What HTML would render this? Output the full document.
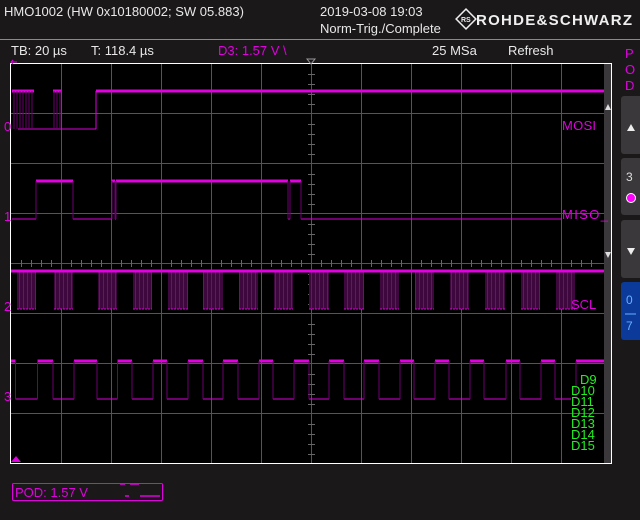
<!DOCTYPE html>
<html><head><meta charset="utf-8"><style>
body{margin:0;width:640px;height:520px;background:#1b181a;overflow:hidden;font-family:"Liberation Sans",sans-serif;}
svg{position:absolute;left:0;top:0}
</style></head><body>
<svg width="640" height="520" viewBox="0 0 640 520" xmlns="http://www.w3.org/2000/svg" font-family="Liberation Sans, sans-serif">
<defs>
<pattern id="br" width="4" height="10" patternUnits="userSpaceOnUse">
<rect width="4" height="10" fill="#3e083e"/><rect x="3" width="1" height="10" fill="#66166a"/>
</pattern>
</defs>
<rect width="640" height="520" fill="#1b181a"/>
<line x1="0" y1="39.5" x2="640" y2="39.5" stroke="#8a8a8a" stroke-width="1"/>
<g fill="#e8e8e8" font-size="13">
<text x="4" y="16">HMO1002 (HW 0x10180002; SW 05.883)</text>
<text x="320" y="16">2019-03-08 19:03</text>
<text x="320" y="33">Norm-Trig./Complete</text>
<text x="11" y="55">TB: 20 µs</text>
<text x="91" y="55">T: 118.4 µs</text>
<text x="432" y="55">25 MSa</text>
<text x="508" y="55">Refresh</text>
</g>
<text x="218" y="55" fill="#e000e0" font-size="13">D3: 1.57 V  \</text>
<g transform="translate(466,19)"><rect x="-7" y="-7" width="14" height="14" transform="rotate(45)" fill="none" stroke="#eee" stroke-width="1.5"/><text x="-5" y="3" font-size="7" fill="#eee" font-weight="bold">RS</text></g>
<text x="476" y="25" fill="#f0f0f0" font-size="15" font-weight="bold" textLength="156">ROHDE&amp;SCHWARZ</text>
<g fill="#e000e0" font-size="13"><text x="625" y="58">P</text><text x="625" y="74">O</text><text x="625" y="90">D</text></g>
<rect x="10.5" y="63.5" width="601" height="400" fill="#000" stroke="#fff" stroke-width="1"/>
<rect x="604" y="64" width="7" height="399" fill="#3a383a"/>
<g stroke="#555" stroke-width="1">
<path d="M61.5 64V463M111.5 64V463M161.5 64V463M211.5 64V463M261.5 64V463M311.5 64V463M361.5 64V463M411.5 64V463M461.5 64V463M511.5 64V463M561.5 64V463"/>
<path d="M11 113.5H604M11 163.5H604M11 213.5H604M11 263.5H604M11 313.5H604M11 363.5H604M11 413.5H604"/>
</g>
<g stroke="#666" stroke-width="1">
<path d="M308 74.5h7M308 84.5h7M308 94.5h7M308 104.5h7M308 124.5h7M308 134.5h7M308 144.5h7M308 154.5h7M308 174.5h7M308 184.5h7M308 194.5h7M308 204.5h7M308 224.5h7M308 234.5h7M308 244.5h7M308 254.5h7M308 274.5h7M308 284.5h7M308 294.5h7M308 304.5h7M308 324.5h7M308 334.5h7M308 344.5h7M308 354.5h7M308 374.5h7M308 384.5h7M308 394.5h7M308 404.5h7M308 424.5h7M308 434.5h7M308 444.5h7M308 454.5h7"/>
<path d="M21.5 260v7M31.5 260v7M41.5 260v7M51.5 260v7M71.5 260v7M81.5 260v7M91.5 260v7M101.5 260v7M121.5 260v7M131.5 260v7M141.5 260v7M151.5 260v7M171.5 260v7M181.5 260v7M191.5 260v7M201.5 260v7M221.5 260v7M231.5 260v7M241.5 260v7M251.5 260v7M271.5 260v7M281.5 260v7M291.5 260v7M301.5 260v7M321.5 260v7M331.5 260v7M341.5 260v7M351.5 260v7M371.5 260v7M381.5 260v7M391.5 260v7M401.5 260v7M421.5 260v7M431.5 260v7M441.5 260v7M451.5 260v7M471.5 260v7M481.5 260v7M491.5 260v7M501.5 260v7M521.5 260v7M531.5 260v7M541.5 260v7M551.5 260v7M571.5 260v7M581.5 260v7M591.5 260v7"/>
</g>
<path d="M307 59h8l-4 5z" fill="none" stroke="#999"/>
<path d="M11 62h6M13 60l-2 2 2 2" stroke="#e000e0" fill="none"/>
<g stroke="#e000e0">
<path d="M12 91H34M53 91H61M96 91H604" stroke-width="3"/>
<path d="M18 129H96M96 129V91" stroke-width="1"/>
</g>
<path d="M14 91v38M17 91v38M20 91v38M23 91v38M26 91v38M29 91v38M32 91v38M54 91v38M57 91v38M60 91v38" stroke="#700070"/>
<g stroke="#e000e0">
<path d="M36 181H73M112 181H115M116 181H288M290 181H301" stroke-width="3"/>
<path d="M12 219H36M73 219H112M115 219H116M288 219H290M301 219H562" stroke-width="1"/>
</g>
<path d="M36 181v38M73 181v38M112 181v38M115 181v38M116 181v38M288 181v38M290 181v38M301 181v38" stroke="#700070"/>
<g fill="url(#br)">
<rect x="17" y="272" width="19" height="37"/><rect x="54" y="272" width="19" height="37"/><rect x="98" y="272" width="19" height="37"/><rect x="133" y="272" width="19" height="37"/><rect x="168" y="272" width="20" height="37"/><rect x="203" y="272" width="20" height="37"/><rect x="239" y="272" width="19" height="37"/><rect x="274" y="272" width="19" height="37"/><rect x="309" y="272" width="20" height="37"/><rect x="344" y="272" width="20" height="37"/><rect x="380" y="272" width="19" height="37"/><rect x="415" y="272" width="19" height="37"/><rect x="450" y="272" width="19" height="37"/><rect x="485" y="272" width="20" height="37"/><rect x="521" y="272" width="19" height="37"/><rect x="556" y="272" width="19" height="37"/>
</g>
<path d="M11 271H604" stroke="#e000e0" stroke-width="3"/>
<path d="M17 309h19M54 309h19M98 309h19M133 309h19M168 309h20M203 309h20M239 309h19M274 309h19M309 309h20M344 309h20M380 309h19M415 309h19M450 309h19M485 309h20M521 309h19M556 309h19" stroke="#e000e0" stroke-dasharray="2 1"/>
<path d="M11 361h4.5M37.5 361h15.5M74 361h23M117.5 361h14.5M153 361h14M188 361h15M223 361h15M259 361h14M294 361h15M329 361h15M364 361h15M400 361h14M435 361h14M470 361h14M506 361h14M541 361h14M576 361h28" stroke="#e000e0" stroke-width="3"/>
<path d="M15.5 399h22M53 399h21M97 399h20.5M132 399h21M167 399h21M203 399h20M238 399h21M273 399h21M309 399h20M344 399h20M379 399h21M414 399h21M449 399h21M484 399h22M520 399h21M555 399h16" stroke="#e000e0"/>
<path d="M15.5 361v38M37.5 361v38M53 361v38M74 361v38M97 361v38M117.5 361v38M132 361v38M153 361v38M167 361v38M188 361v38M203 361v38M223 361v38M238 361v38M259 361v38M273 361v38M294 361v38M309 361v38M329 361v38M344 361v38M364 361v38M379 361v38M400 361v38M414 361v38M435 361v38M449 361v38M470 361v38M484 361v38M506 361v38M520 361v38M541 361v38M555 361v38M576 361v38" stroke="#700070"/>
<g fill="#e000e0" font-size="13">
<text x="4" y="131">0</text><text x="4" y="221">1</text><text x="4" y="311">2</text><text x="4" y="401">3</text>
<text x="562" y="130" textLength="34">MOSI</text><text x="562" y="219" textLength="46">MISO_</text><text x="571" y="309">SCL</text>
</g>
<g fill="#22ee22" font-size="13">
<text x="580" y="384">D9</text><text x="571" y="395">D10</text><text x="571" y="406">D11</text><text x="571" y="417">D12</text><text x="571" y="428">D13</text><text x="571" y="439">D14</text><text x="571" y="450">D15</text>
</g>
<path d="M11 462l5-6 5 6z" fill="#e000e0"/>
<path d="M605 110l3-6 3 6z" fill="#ddd"/><path d="M605 252l3 6 3-6z" fill="#ddd"/>
<rect x="12.5" y="483.5" width="150" height="17" fill="none" stroke="#e000e0" rx="1"/>
<text x="15" y="497" fill="#e000e0" font-size="13">POD: 1.57 V</text>
<path d="M120 484h5M130 484h9M125 496h4M140 496h20" stroke="#e000e0" stroke-width="1.5"/>
<rect x="621" y="96" width="21" height="58" rx="3" fill="#3a383a"/>
<path d="M627 131l4-7 4 7z" fill="#eee"/>
<rect x="621" y="158" width="21" height="57" rx="3" fill="#3a383a"/>
<text x="626" y="181" fill="#ddd" font-size="12">3</text>
<circle cx="631" cy="198" r="4.5" fill="#ff00ff" stroke="#fff" stroke-width="1"/>
<rect x="621" y="220" width="21" height="58" rx="3" fill="#3a383a"/>
<path d="M627 248l4 7 4-7z" fill="#eee"/>
<rect x="621" y="282" width="21" height="58" rx="3" fill="#0b3a9a"/>
<text x="626" y="304" fill="#6ab0ff" font-size="12">0</text>
<path d="M625 314h11" stroke="#6ab0ff"/>
<text x="626" y="330" fill="#6ab0ff" font-size="12">7</text>
</svg>
</body></html>
